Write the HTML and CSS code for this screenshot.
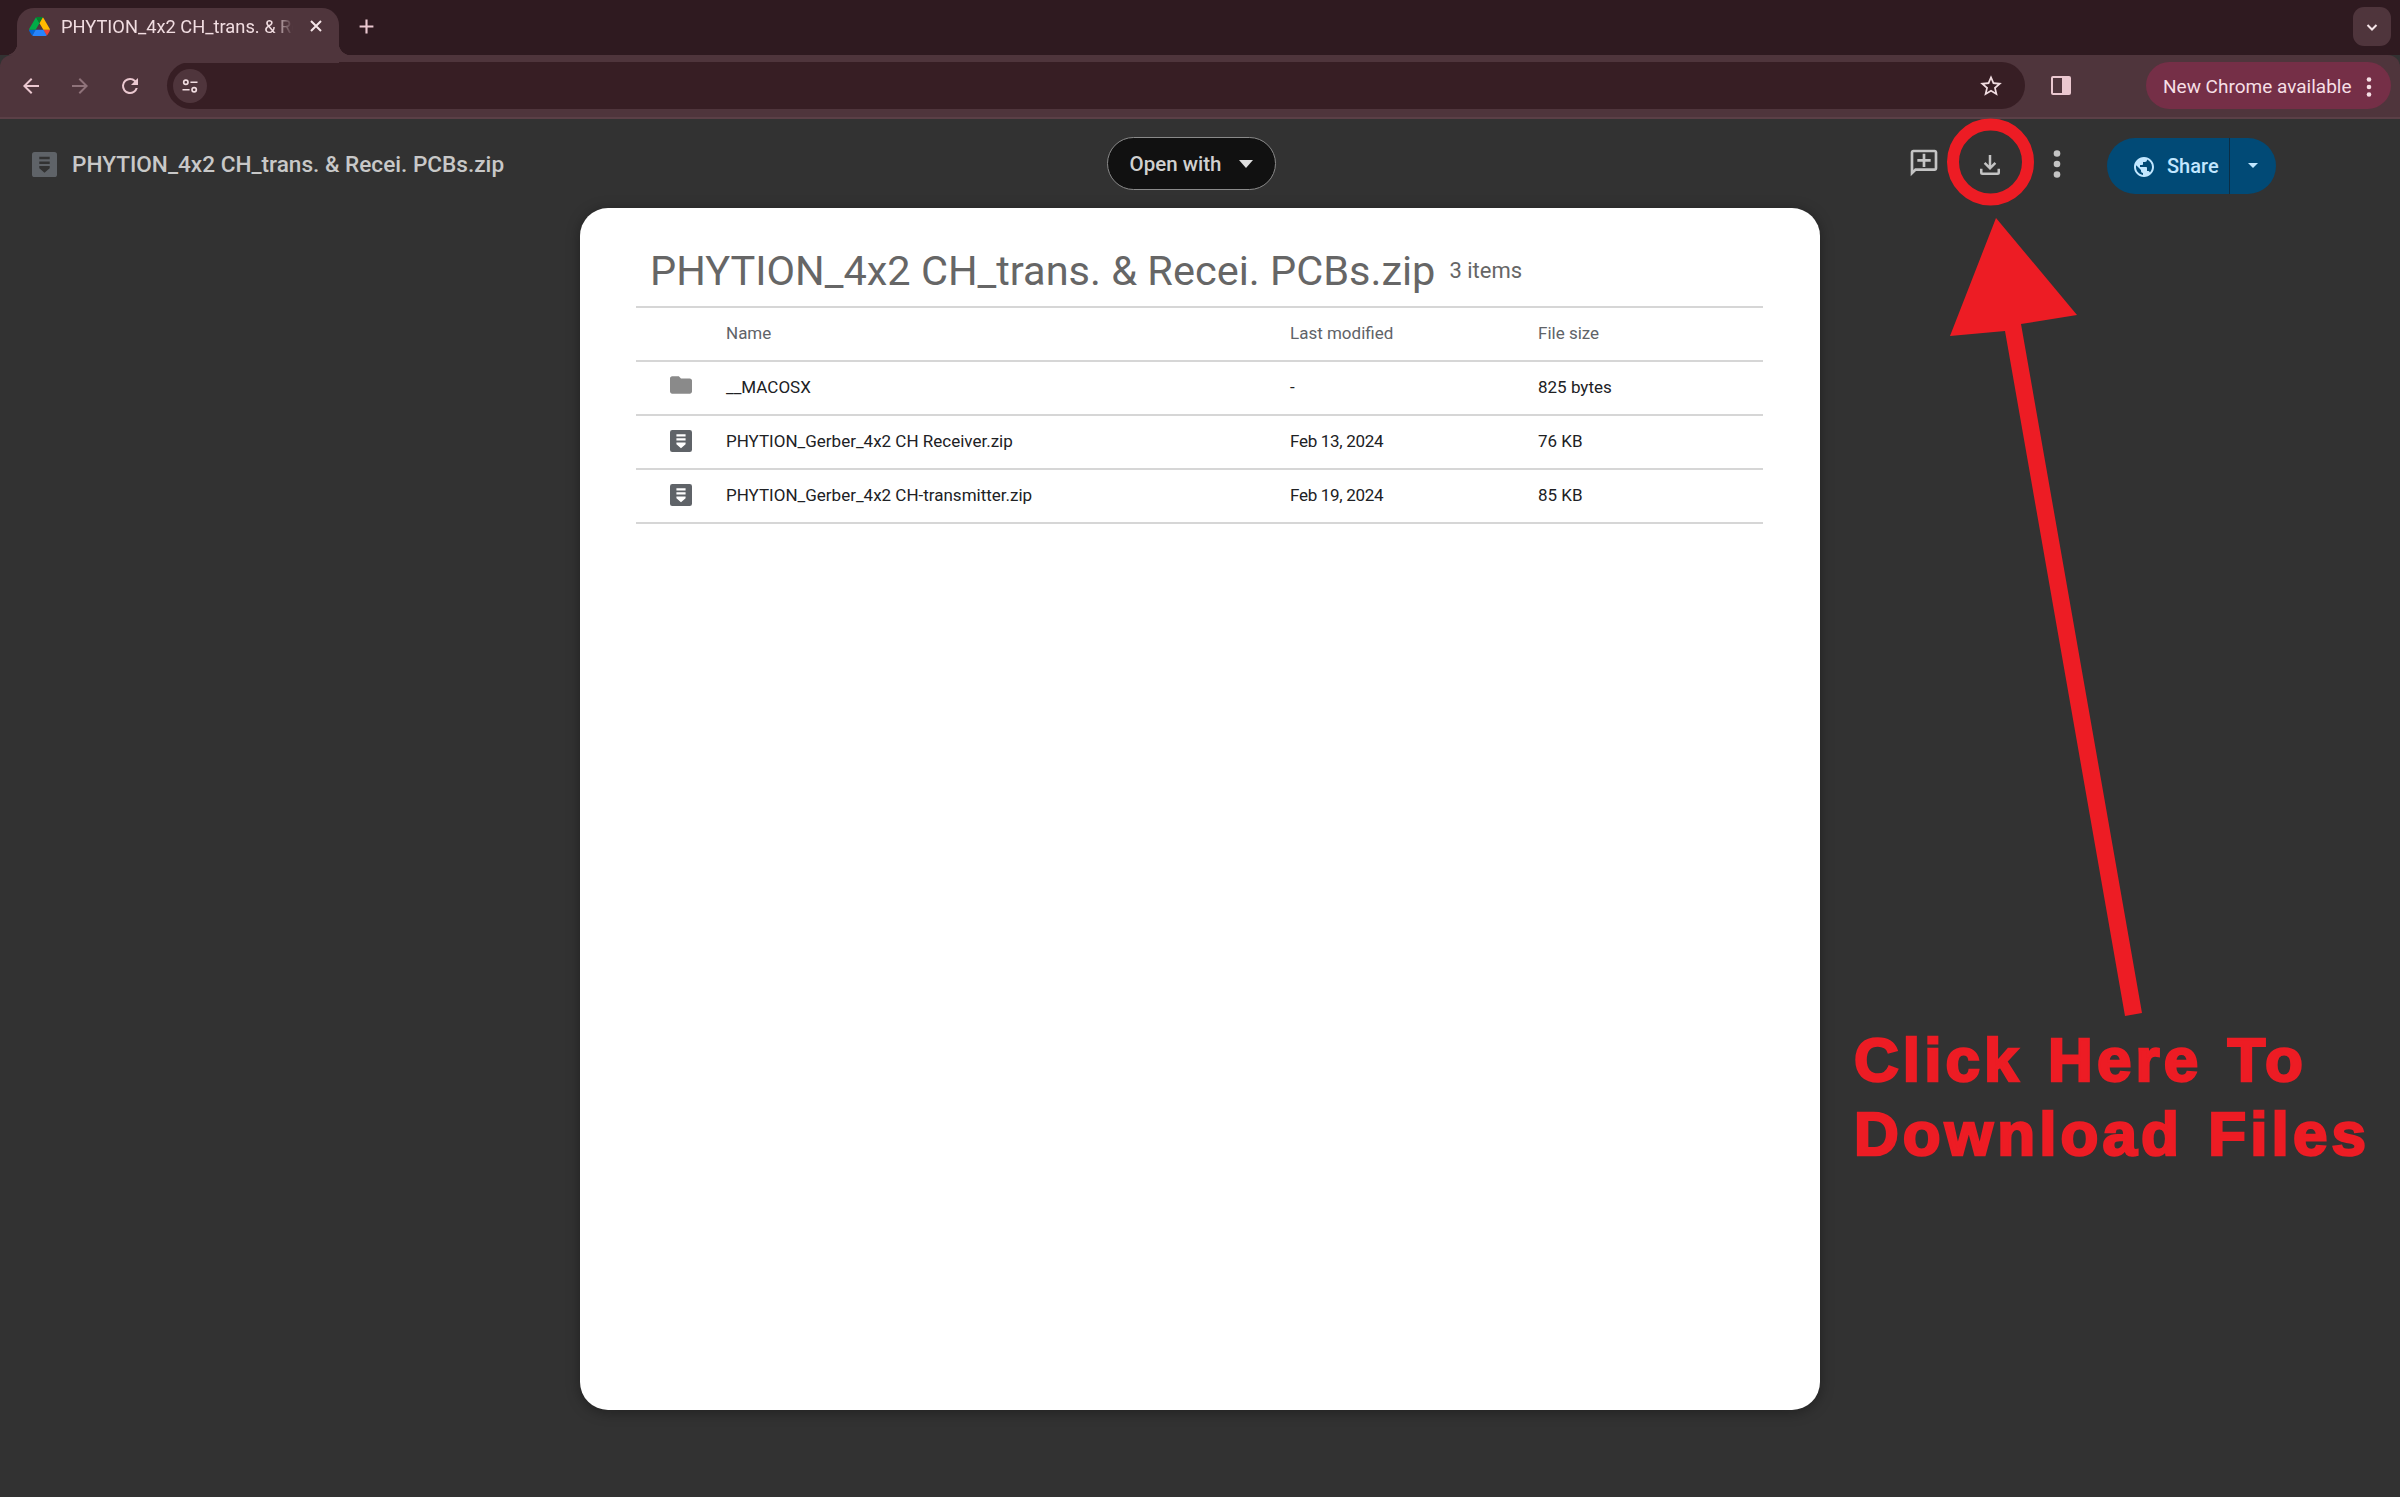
FILE: index.html
```html
<!DOCTYPE html>
<html lang="en">
<head>
    <meta charset="UTF-8">
    <title>PHYTION_4x2 CH_trans. &amp; Recei. PCBs.zip</title>
    <link rel="stylesheet" href="styles.css">
</head>
<body>

    <!-- chrome tab strip -->
    <div class="tabstrip">
        <div class="tab">
            <svg class="tab-logo" viewBox="0 0 87.3 78">
                <path d="m6.6 66.85 3.85 6.65c.8 1.4 1.95 2.5 3.3 3.3l13.75-23.8h-27.5c0 1.55.4 3.1 1.2 4.5z" fill="#0066da"/>
                <path d="m43.65 25-13.75-23.8c-1.35.8-2.5 1.9-3.3 3.3l-25.4 44a9.06 9.06 0 0 0 -1.2 4.5h27.5z" fill="#00ac47"/>
                <path d="m73.55 76.8c1.35-.8 2.5-1.9 3.3-3.3l1.6-2.75 7.65-13.25c.8-1.4 1.2-2.95 1.2-4.5h-27.502l5.852 11.5z" fill="#ea4335"/>
                <path d="m43.65 25 13.75-23.8c-1.35-.8-2.9-1.2-4.5-1.2h-18.5c-1.6 0-3.15.45-4.5 1.2z" fill="#00832d"/>
                <path d="m59.8 53h-32.3l-13.75 23.8c1.35.8 2.9 1.2 4.5 1.2h50.8c1.6 0 3.15-.45 4.5-1.2z" fill="#2684fc"/>
                <path d="m73.4 26.5-12.7-22c-.8-1.4-1.95-2.5-3.3-3.3l-13.75 23.8 16.15 28h27.45c0-1.55-.4-3.1-1.2-4.5z" fill="#ffba00"/>
            </svg>
            <span class="tab-title">PHYTION_4x2 CH_trans. &amp; Re</span>
            <svg class="tab-close" viewBox="0 0 16 16"><path d="M3 3l10 10M13 3L3 13"/></svg>
        </div>
        <svg class="new-tab" viewBox="0 0 16 16"><path d="M8 1.5v13M1.5 8h13"/></svg>
        <div class="tab-search">
            <svg viewBox="0 0 16 16"><path d="M3.5 6l4.5 4.5L12.500 6"/></svg>
        </div>
    </div>

    <!-- chrome toolbar -->
    <div class="toolbar">
        <svg class="tool-icon" viewBox="0 0 24 24"><path d="M20 11H7.800l5.600-5.600L12 4l-8 8 8 8 1.400-1.400L7.800 13H20z"/></svg>
        <svg class="tool-icon dim" viewBox="0 0 24 24"><path d="M4 11h12.200l-5.600-5.600L12 4l8 8-8 8-1.400-1.400 5.600-5.600H4z"/></svg>
        <svg class="tool-icon" viewBox="0 0 24 24"><path d="M17.650 6.350A7.960 7.960 0 0 0 12 4a8 8 0 1 0 7.740 10h-2.080A6 6 0 1 1 12 6c1.660 0 3.140.69 4.220 1.780L13 11h7V4z"/></svg>
        <div class="omnibox">
            <div class="site-chip">
                <svg viewBox="0 0 24 24"><circle cx="7" cy="7.500" r="2.600"/><path d="M12.500 7.500H21M3 16.500h8.500"/><circle cx="17" cy="16.500" r="2.600"/></svg>
            </div>
            <svg class="star" viewBox="0 0 24 24"><path d="M22 9.240l-7.190-.62L12 2 9.190 8.630 2 9.240l5.460 4.730L5.820 21 12 17.270 18.180 21l-1.630-7.030L22 9.240zM12 15.400l-3.760 2.270 1-4.280-3.320-2.880 4.380-.38L12 6.100l1.710 4.040 4.380.38-3.320 2.880 1 4.280L12 15.400z"/></svg>
        </div>
        <div class="side-panel"></div>
        <div class="update-chip">
            <span>New Chrome available</span>
            <svg viewBox="0 0 6 24"><circle cx="3" cy="4.500" r="2.300"/><circle cx="3" cy="12" r="2.300"/><circle cx="3" cy="19.500" r="2.300"/></svg>
        </div>
    </div>

    <!-- drive preview -->
    <div class="viewer">
        <div class="viewer-head">
            <div class="doc-name">
                <svg class="zip-icon light" viewBox="0 0 24 24">
                    <rect x="0" y="0" width="24" height="24" rx="2.500"/>
                    <path class="cut" d="M7 4.500h10v2.500H7zM7 9h10v2.500H7zM7 13.500h10v2L12 20l-5-4.500z"/>
                </svg>
                <span>PHYTION_4x2 CH_trans. &amp; Recei. PCBs.zip</span>
            </div>
            <div class="open-with">
                <span>Open with</span>
                <i class="caret"></i>
            </div>
            <div class="head-actions">
                <svg class="act-comment" viewBox="0 0 24 24"><path d="M20 2H4c-1.100 0-2 .9-2 2v18l4-4h14c1.100 0 2-.9 2-2V4c0-1.100-.9-2-2-2zm0 14H5.200L4 17.200V4h16v12zM11 5h2v4h4v2h-4v4h-2v-4H7V9h4z"/></svg>
                <svg class="act-download" viewBox="0 0 24 24"><path d="M12 16l-5-5 1.400-1.450L11 12.150V4h2v8.150l2.600-2.600L17 11l-5 5zM6 20a2 2 0 0 1-2-2v-3h2v3h12v-3h2v3a2 2 0 0 1-2 2H6z"/></svg>
                <svg class="act-more" viewBox="0 0 8 30"><circle cx="4" cy="4.500" r="3.300"/><circle cx="4" cy="15" r="3.300"/><circle cx="4" cy="25.500" r="3.300"/></svg>
                <div class="share">
                    <div class="share-main">
                        <svg viewBox="0 0 24 24"><path d="M12 2C6.480 2 2 6.480 2 12s4.480 10 10 10 10-4.480 10-10S17.520 2 12 2zm-1 17.930c-3.950-.49-7-3.850-7-7.930 0-.62.08-1.210.21-1.790L9 15v1c0 1.100.9 2 2 2v1.930zm6.900-2.540c-.26-.81-1-1.390-1.900-1.390h-1v-3c0-.55-.45-1-1-1H8v-2h2c.55 0 1-.45 1-1V7h2c1.100 0 2-.9 2-2v-.41c2.930 1.190 5 4.060 5 7.410 0 2.080-.8 3.970-2.100 5.390z"/></svg>
                        <span>Share</span>
                    </div>
                    <div class="share-more"><i class="caret small"></i></div>
                </div>
            </div>
        </div>

        <div class="card">
            <div class="card-title">
                <h1>PHYTION_4x2 CH_trans. &amp; Recei. PCBs.zip</h1>
                <span class="count">3 items</span>
            </div>
            <div class="row head">
                <span></span>
                <span>Name</span>
                <span>Last modified</span>
                <span>File size</span>
            </div>
            <div class="row">
                <svg class="folder" viewBox="2 4 20 16"><path d="M10 4H4c-1.100 0-2 .9-2 2v12c0 1.100.9 2 2 2h16c1.100 0 2-.9 2-2V8c0-1.100-.9-2-2-2h-8l-2-2z"/></svg>
                <span>__MACOSX</span>
                <span>-</span>
                <span>825 bytes</span>
            </div>
            <div class="row">
                <svg class="zip-icon" viewBox="0 0 24 24">
                    <rect x="0" y="0" width="24" height="24" rx="2.500"/>
                    <path class="cut" d="M7 4.500h10v2.500H7zM7 9h10v2.500H7zM7 13.500h10v2L12 20l-5-4.500z"/>
                </svg>
                <span>PHYTION_Gerber_4x2 CH Receiver.zip</span>
                <span class="date">Feb 13, 2024</span>
                <span>76 KB</span>
            </div>
            <div class="row">
                <svg class="zip-icon" viewBox="0 0 24 24">
                    <rect x="0" y="0" width="24" height="24" rx="2.500"/>
                    <path class="cut" d="M7 4.500h10v2.500H7zM7 9h10v2.500H7zM7 13.500h10v2L12 20l-5-4.500z"/>
                </svg>
                <span>PHYTION_Gerber_4x2 CH-transmitter.zip</span>
                <span class="date">Feb 19, 2024</span>
                <span>85 KB</span>
            </div>
        </div>
    </div>

    <!-- red annotation drawn over the screenshot -->
    <svg class="markup" viewBox="0 0 2400 1497">
        <circle cx="1990.500" cy="162" r="37.500"/>
        <polygon points="1996,218 2077,315 2021,324 2142,1013 2125,1016 2005,331 1950,336"/>
    </svg>
    <div class="markup-text">Click Here To<br>Download Files</div>

</body>
</html>
```

FILE: styles.css
```css
html, body {
    margin: 0;
    padding: 0;
}
body {
    width: 2400px;
    height: 1497px;
    overflow: hidden;
    position: relative;
    background-color: #323232;
    font-family: Roboto, "Liberation Sans", sans-serif;
}
svg {
    display: block;
    flex: none;
}

/* tab strip */
.tabstrip {
    height: 55px;
    background-color: #2f1a20;
    display: flex;
    align-items: flex-start;
    padding-left: 17px;
    padding-right: 9px;
    box-sizing: border-box;
}
.tab {
    width: 322px;
    height: 55px;
    margin-top: 8px;
    box-sizing: border-box;
    padding: 0 15px 19px 12px;
    background-color: #4f353c;
    border-radius: 17px 17px 0 0;
    display: flex;
    align-items: center;
    position: relative;
    z-index: 1;
}
.tab::before, .tab::after {
    content: "";
    position: absolute;
    bottom: 8px;
    width: 12px;
    height: 12px;
}
.tab::before {
    left: -12px;
    background: radial-gradient(circle at 0 0, transparent 12px, #4f353c 12.500px);
}
.tab::after {
    right: -12px;
    background: radial-gradient(circle at 100% 0, transparent 12px, #4f353c 12.500px);
}
.tab-logo {
    width: 21px;
    height: 19px;
}
.tab-title {
    margin-left: 11px;
    width: 241px;
    white-space: nowrap;
    color: #f1dde1;
    font-size: 18.300px;
    -webkit-mask-image: linear-gradient(to right, #000 212px, transparent 232px);
    mask-image: linear-gradient(to right, #000 212px, transparent 232px);
}
.tab-close {
    width: 16px;
    height: 16px;
    margin-left: 6px;
    fill: none;
    stroke: #f6e6e9;
    stroke-width: 2;
}
.new-tab {
    width: 17px;
    height: 17px;
    margin: 18px 0 0 19px;
    fill: none;
    stroke: #ebc8d0;
    stroke-width: 2;
}
.tab-search {
    margin: 7px 0 0 auto;
    width: 38px;
    height: 39px;
    border-radius: 11px;
    background-color: #4f353c;
    display: flex;
    align-items: center;
    justify-content: center;
}
.tab-search svg {
    width: 16px;
    height: 16px;
    fill: none;
    stroke: #f6e6e9;
    stroke-width: 2;
}

/* toolbar */
.toolbar {
    height: 64px;
    box-sizing: border-box;
    background-color: #4f353c;
    border-bottom: 2px solid #5b4047;
    border-radius: 12px 12px 0 0;
    display: flex;
    align-items: center;
    padding: 0 9px 1px 19px;
    position: relative;
}
.tool-icon {
    width: 24px;
    height: 24px;
    margin-right: 25px;
    fill: #ebc8d0;
}
.tool-icon.dim {
    fill: #8f737a;
}
.tool-icon:nth-child(3) {
    margin-left: 1px;
}
.omnibox {
    width: 1858px;
    height: 47px;
    background-color: #371e24;
    border-radius: 24px;
    display: flex;
    align-items: center;
    justify-content: space-between;
    padding: 0 21px 0 6px;
    box-sizing: border-box;
}
.site-chip {
    width: 34px;
    height: 34px;
    border-radius: 50%;
    background-color: #4f353c;
    display: flex;
    align-items: center;
    justify-content: center;
}
.site-chip svg {
    width: 20px;
    height: 20px;
    fill: none;
    stroke: #f1dde1;
    stroke-width: 2;
}
.star {
    width: 26px;
    height: 26px;
    fill: #f1dde1;
}
.side-panel {
    margin-left: 26px;
    width: 20px;
    height: 19px;
    border: 2px solid #ebc8d0;
    border-right-width: 9px;
    border-radius: 2px;
    box-sizing: border-box;
}
.update-chip {
    margin-left: auto;
    width: 245px;
    height: 47px;
    box-sizing: border-box;
    padding: 2px 19px 0 17px;
    border-radius: 24px;
    background-color: #752f47;
    color: #f6dfe5;
    font-size: 19px;
    display: flex;
    align-items: center;
    justify-content: space-between;
}
.update-chip svg {
    width: 6px;
    height: 24px;
    fill: #f6dfe5;
}

/* drive viewer */
.viewer-head {
    height: 89px;
    display: grid;
    grid-template-columns: 1107px 169px 1fr;
    align-items: center;
}
.doc-name {
    display: flex;
    align-items: center;
    padding-left: 32px;
    padding-top: 1px;
    color: #c8c8c8;
    font-size: 22.600px;
    font-weight: 500;
}
.doc-name span {
    margin-left: 15px;
}
.zip-icon {
    width: 22px;
    height: 22px;
}
.zip-icon rect {
    fill: #5f6368;
}
.zip-icon .cut {
    fill: #ffffff;
}
.zip-icon.light {
    width: 25px;
    height: 25px;
}
.zip-icon.light .cut {
    fill: #323232;
}
.open-with {
    height: 53px;
    box-sizing: border-box;
    margin-top: -1px;
    padding: 2px 0 0 0;
    border: 1.500px solid #8a8a8a;
    border-radius: 27px;
    background-color: #111111;
    color: #d0d0d0;
    font-size: 20.500px;
    font-weight: 500;
    display: flex;
    align-items: center;
    justify-content: center;
    gap: 18px;
}
.caret {
    display: block;
    border-left: 7.500px solid transparent;
    border-right: 7.500px solid transparent;
    border-top: 8px solid #e0e0e0;
}
.caret.small {
    border-left-width: 5.500px;
    border-right-width: 5.500px;
    border-top: 5.500px solid #c2e7ff;
}
.head-actions {
    display: flex;
    align-items: center;
    padding-left: 633px;
}
.act-comment {
    width: 32px;
    height: 32px;
    fill: #c4c4c4;
    margin-left: -1px;
    margin-top: -1px;
}
.act-download {
    width: 30px;
    height: 30px;
    fill: #c4c4c4;
    margin-left: 35px;
    margin-top: 2px;
}
.act-more {
    width: 8px;
    height: 30px;
    fill: #c4c4c4;
    margin-left: 48px;
}
.share {
    margin-left: 46px;
    margin-top: 4px;
    width: 169px;
    height: 56px;
    border-radius: 28px;
    overflow: hidden;
    background-color: #014a76;
    display: flex;
}
.share-main {
    width: 123px;
    border-right: 1px solid #0b2e46;
    display: flex;
    align-items: center;
    padding-left: 25px;
    box-sizing: border-box;
    color: #c2e7ff;
    font-size: 20px;
    font-weight: 500;
}
.share-main svg {
    width: 24px;
    height: 24px;
    fill: #c2e7ff;
    margin-right: 11px;
    margin-top: 2px;
}
.share-more {
    flex: 1;
    display: flex;
    align-items: center;
    justify-content: center;
}

/* zip listing */
.card {
    margin-left: 580px;
    width: 1240px;
    height: 1202px;
    box-sizing: border-box;
    padding: 0 57px 0 56px;
    background-color: #ffffff;
    border-radius: 28px;
    box-shadow: 0 2px 14px rgba(0, 0, 0, 0.35);
}
.card-title {
    height: 100px;
    box-sizing: border-box;
    padding: 26px 0 0 14px;
    border-bottom: 2px solid #d6d6d6;
    display: flex;
    align-items: center;
    gap: 14px;
}
h1 {
    margin: 0;
    color: #666666;
    font-size: 41.500px;
    font-weight: 400;
}
.count {
    color: #666666;
    font-size: 22px;
}
.row {
    height: 54px;
    box-sizing: border-box;
    padding-bottom: 2px;
    border-bottom: 2px solid #d6d6d6;
    display: grid;
    grid-template-columns: 90px 564px 248px 1fr;
    align-items: center;
    color: #202124;
    font-size: 17px;
}
.row > svg {
    margin-left: 34px;
}
.row.head {
    color: #5f6368;
}
.date {
    letter-spacing: -0.300px;
}
.folder {
    width: 22px;
    height: 18px;
    fill: #8a8a8a;
    margin-top: -4px;
}

/* annotation */
.markup {
    position: absolute;
    left: 0;
    top: 0;
    width: 2400px;
    height: 1497px;
    pointer-events: none;
}
.markup circle {
    fill: none;
    stroke: #ed1c24;
    stroke-width: 12;
}
.markup polygon {
    fill: #ed1c24;
}
.markup-text {
    position: absolute;
    left: 1854px;
    top: 1023px;
    color: #ed1c24;
    font-family: "Liberation Sans", Arial, sans-serif;
    font-size: 62px;
    font-weight: 700;
    line-height: 74px;
    letter-spacing: 4.100px;
    word-spacing: 4px;
    white-space: nowrap;
    -webkit-text-stroke: 2.500px #ed1c24;
}
```
